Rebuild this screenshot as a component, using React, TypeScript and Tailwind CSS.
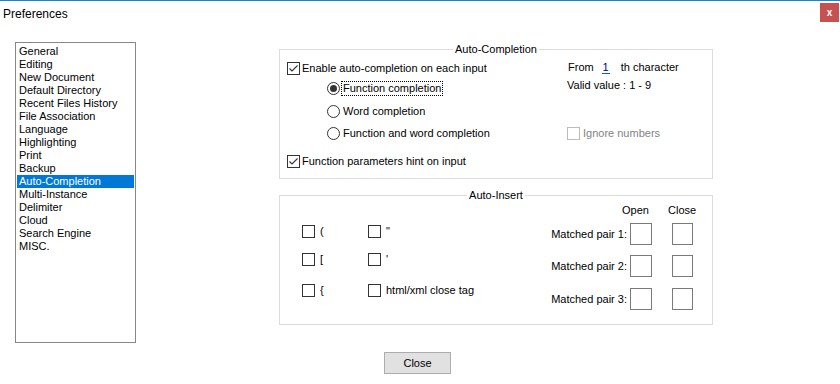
import React from 'react';

const categories = [
  'General',
  'Editing',
  'New Document',
  'Default Directory',
  'Recent Files History',
  'File Association',
  'Language',
  'Highlighting',
  'Print',
  'Backup',
  'Auto-Completion',
  'Multi-Instance',
  'Delimiter',
  'Cloud',
  'Search Engine',
  'MISC.',
];

const Check = ({ checked = false, disabled = false }: { checked?: boolean; disabled?: boolean }) => (
  <span
    className={`flex h-[13px] w-[13px] shrink-0 items-center justify-center border bg-white ${
      disabled ? 'border-[#bcbcbc]' : 'border-[#333333]'
    }`}
  >
    {checked && (
      <svg width="11" height="11" viewBox="0 0 11 11">
        <path d="M1.5 5.5 L4 8 L9.5 2.5" stroke="#333333" strokeWidth="1.1" fill="none" />
      </svg>
    )}
  </span>
);

const Radio = ({ checked = false }: { checked?: boolean }) => (
  <span className="flex h-[13px] w-[13px] shrink-0 items-center justify-center rounded-full border border-[#333333] bg-white">
    {checked && <span className="h-[7px] w-[7px] rounded-full bg-[#333333]" />}
  </span>
);

const GroupBox = ({
  title,
  className,
  children,
}: {
  title: string;
  className?: string;
  children: React.ReactNode;
}) => (
  <div className={`relative border border-[#dcdcdc] ${className ?? ''}`}>
    <span className="absolute left-1/2 top-[-7px] -translate-x-1/2 bg-white px-[2px] leading-[13px]">
      {title}
    </span>
    {children}
  </div>
);

const PairBox = ({ className }: { className?: string }) => (
  <span className={`h-[22px] shrink-0 border border-[#7a7a7a] bg-white ${className ?? ''}`} />
);

export default function App() {
  return (
    <div className="flex h-[384px] w-[840px] flex-col overflow-hidden border-t border-[#1883d7] bg-white font-['Liberation_Sans',Arial,sans-serif] text-[11px] text-black">
      {/* title bar */}
      <div className="flex h-[23px] shrink-0 items-start justify-between">
        <span className="mt-[6px] pl-[3px] text-[12px] leading-[14px]">Preferences</span>
        <span className="mr-[1px] mt-[2px] flex h-[19px] w-[19px] items-center justify-center bg-[#c75050] text-[10px] font-bold leading-none text-white">
          x
        </span>
      </div>

      <div className="flex shrink-0">
        {/* category list */}
        <div className="ml-[15px] mt-[18px] h-[301px] w-[121px] border border-[#828790] px-[1px] pt-[2px]">
          {categories.map((c) => (
            <div
              key={c}
              className={`h-[13px] whitespace-nowrap pl-[2px] leading-[13px] ${
                c === 'Auto-Completion' ? 'bg-[#0078d7] text-white' : ''
              }`}
            >
              {c}
            </div>
          ))}
        </div>

        <div className="ml-[143px] mt-[25px] w-[434px]">
          <GroupBox title="Auto-Completion" className="h-[130px]">
            <div className="flex">
              <div className="w-[287px] pl-[7px]">
                <div className="mt-[11px] flex h-[15px] items-center">
                  <Check checked />
                  <span className="ml-[2px] whitespace-nowrap">Enable auto-completion on each input</span>
                </div>
                <div className="ml-[40px] mt-[5px] flex h-[15px] items-center">
                  <Radio checked />
                  <span className="ml-[1px] whitespace-nowrap border border-dotted border-black px-[1px] leading-[13px]">
                    Function completion
                  </span>
                </div>
                <div className="ml-[40px] mt-[8px] flex h-[15px] items-center">
                  <Radio />
                  <span className="ml-[3px] whitespace-nowrap">Word completion</span>
                </div>
                <div className="ml-[40px] mt-[7px] flex h-[15px] items-center">
                  <Radio />
                  <span className="ml-[3px] whitespace-nowrap">Function and word completion</span>
                </div>
                <div className="mt-[13px] flex h-[15px] items-center">
                  <Check checked />
                  <span className="ml-[2px] whitespace-nowrap">Function parameters hint on input</span>
                </div>
              </div>
              <div className="flex-1">
                <div className="mt-[10px] flex h-[15px] items-center whitespace-nowrap pl-[1px]">
                  <span>From</span>
                  <span className="ml-[8px] w-[8px] border-b border-[#0066cc] text-center leading-[12px] text-[#000080]">
                    1
                  </span>
                  <span className="ml-[11px]">th character</span>
                </div>
                <div className="mt-[3px] flex h-[15px] items-center whitespace-nowrap">Valid value : 1 - 9</div>
                <div className="mt-[33px] flex h-[15px] items-center">
                  <Check disabled />
                  <span className="ml-[3px] whitespace-nowrap text-[#838383]">Ignore numbers</span>
                </div>
              </div>
            </div>
          </GroupBox>

          <GroupBox title="Auto-Insert" className="mt-[16px] h-[130px]">
            <div className="flex">
              <div className="w-[260px] pl-[22px]">
                <div className="mt-[28px] flex h-[15px] items-center">
                  <div className="flex w-[66px] items-center">
                    <Check />
                    <span className="ml-[5px]">(</span>
                  </div>
                  <Check />
                  <span className="ml-[5px]">"</span>
                </div>
                <div className="mt-[13px] flex h-[15px] items-center">
                  <div className="flex w-[66px] items-center">
                    <Check />
                    <span className="ml-[5px]">[</span>
                  </div>
                  <Check />
                  <span className="ml-[5px]">'</span>
                </div>
                <div className="mt-[16px] flex h-[15px] items-center">
                  <div className="flex w-[66px] items-center">
                    <Check />
                    <span className="ml-[5px]">{'{'}</span>
                  </div>
                  <Check />
                  <span className="ml-[5px] whitespace-nowrap">html/xml close tag</span>
                </div>
              </div>
              <div className="flex-1">
                <div className="mt-[7px] flex h-[15px] items-center">
                  <span className="ml-[82px] w-[46px]">Open</span>
                  <span>Close</span>
                </div>
                {[1, 2, 3].map((n) => (
                  <div
                    key={n}
                    className={`flex items-center ${n === 1 ? 'mt-[5px]' : n === 2 ? 'mt-[10px]' : 'mt-[11px]'}`}
                  >
                    <span className="w-[87px] whitespace-nowrap text-right">Matched pair {n}:</span>
                    <PairBox className="ml-[3px] w-[22px]" />
                    <PairBox className="ml-[20px] w-[21px]" />
                  </div>
                ))}
              </div>
            </div>
          </GroupBox>
        </div>
      </div>

      <div className="ml-[384px] mt-[9px] flex h-[22px] w-[67px] items-center justify-center border border-[#adadad] bg-[#e1e1e1]">
        Close
      </div>
    </div>
  );
}
